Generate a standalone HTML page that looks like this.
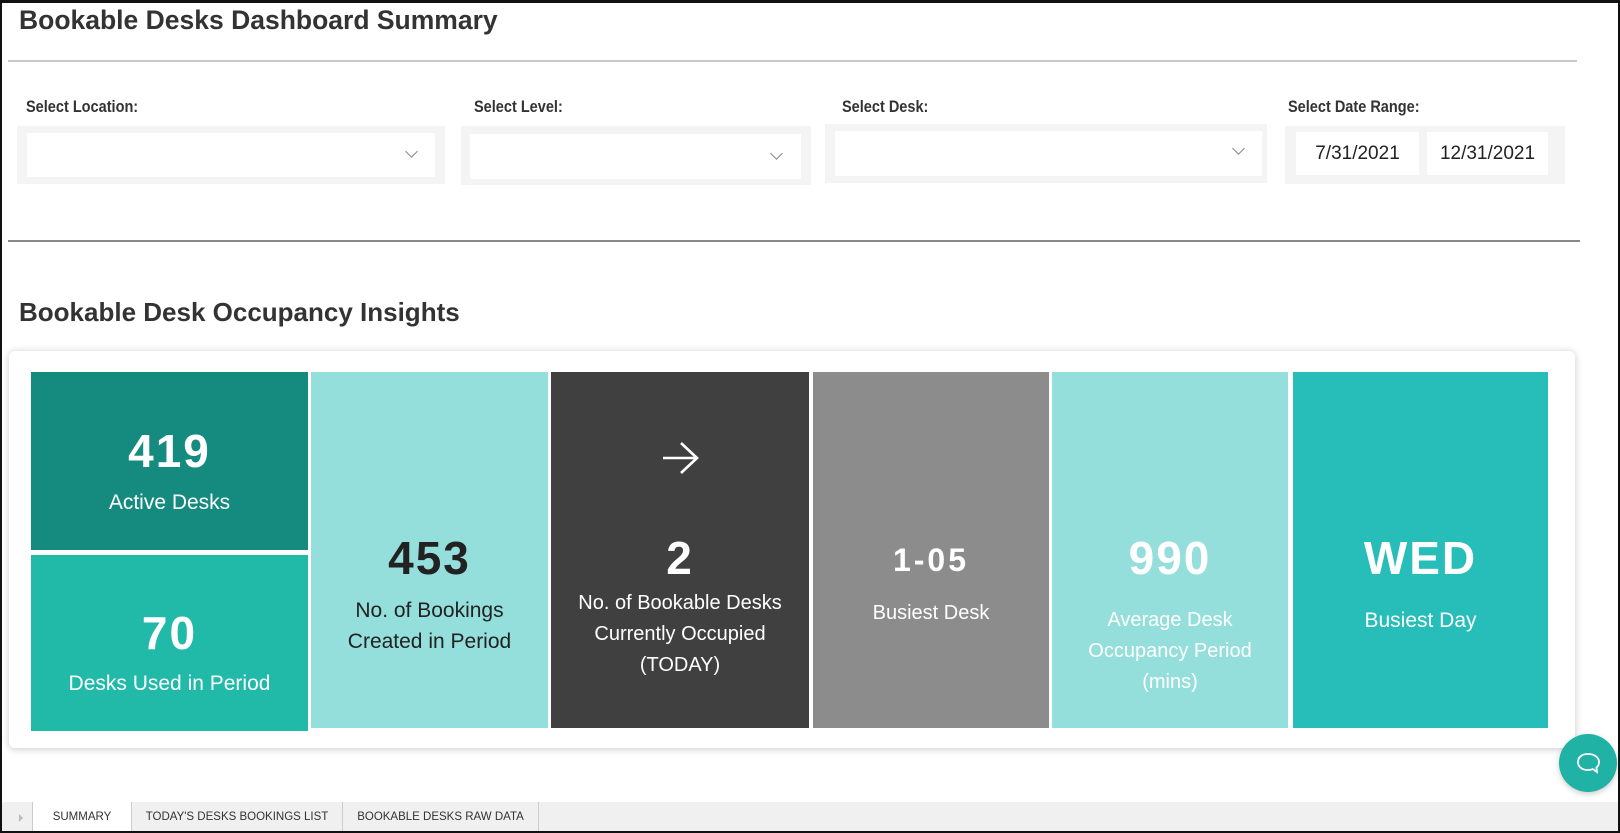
<!DOCTYPE html>
<html><head><meta charset="utf-8"><style>
*{margin:0;padding:0;box-sizing:border-box}
body{width:1620px;height:833px;overflow:hidden;background:#fff;font-family:"Liberation Sans",sans-serif;position:relative}
.frame{position:absolute;left:0;top:0;width:1620px;height:833px;border:2px solid #111;border-top-width:3px;pointer-events:none;z-index:10}
.a{position:absolute}
h1{position:absolute;left:19px;top:5px;font-size:26.5px;font-weight:bold;color:#333}
h2{position:absolute;left:19px;top:297px;font-size:26px;font-weight:bold;color:#333}
.lbl{position:absolute;top:98px;font-size:16.5px;font-weight:bold;color:#333;transform:scaleX(.88);transform-origin:left}
.ob{position:absolute;background:#f4f4f4}
.ib{position:absolute;background:#fff}
.chev{position:absolute;width:9px;height:9px;border-right:1px solid #888;border-bottom:1px solid #888;transform:rotate(45deg)}
.date{position:absolute;background:#fff;font-size:19px;color:#222;text-align:center;line-height:43px}
.t{position:absolute;color:#fff;text-align:center}
.n{position:absolute;left:0;right:0;font-size:46px;font-weight:bold;letter-spacing:2px;line-height:50px}
.l{position:absolute;left:0;right:0;font-size:21px;line-height:31px}
.tab{position:absolute;top:802px;height:31px;font-size:11.5px;color:#333;line-height:31px;text-align:center;border-right:1px solid #ccc}
</style></head><body>
<h1>Bookable Desks Dashboard Summary</h1>
<div class="a" style="left:8px;top:60px;width:1569px;height:2px;background:#c8c8c8"></div>

<div class="lbl" style="left:26px">Select Location:</div>
<div class="lbl" style="left:474px">Select Level:</div>
<div class="lbl" style="left:842px">Select Desk:</div>
<div class="lbl" style="left:1288px">Select Date Range:</div>

<div class="ob" style="left:17px;top:126px;width:428px;height:58px"></div>
<div class="ib" style="left:27px;top:133px;width:408px;height:44px"></div>
<div class="chev" style="left:407px;top:147px"></div>
<div class="ob" style="left:461px;top:126px;width:350px;height:59px"></div>
<div class="ib" style="left:470px;top:134px;width:331px;height:45px"></div>
<div class="chev" style="left:772px;top:149px"></div>
<div class="ob" style="left:825px;top:124px;width:442px;height:59px"></div>
<div class="ib" style="left:835px;top:131px;width:427px;height:45px"></div>
<div class="chev" style="left:1234px;top:144px"></div>
<div class="ob" style="left:1285px;top:126px;width:280px;height:58px"></div>
<div class="date" style="left:1296px;top:132px;width:123px;height:43px">7/31/2021</div>
<div class="date" style="left:1427px;top:132px;width:121px;height:43px">12/31/2021</div>

<div class="a" style="left:8px;top:240px;width:1572px;height:2px;background:#888"></div>
<h2>Bookable Desk Occupancy Insights</h2>

<div class="a" style="left:9px;top:351px;width:1566px;height:397px;background:#fff;border-radius:6px;box-shadow:0 1px 8px rgba(0,0,0,.22)"></div>

<div class="t" style="left:31px;top:372px;width:277px;height:178px;background:#158a7e">
 <div class="n" style="top:54px">419</div><div class="l" style="top:115px">Active Desks</div></div>
<div class="t" style="left:31px;top:555px;width:277px;height:176px;background:#21b9a8">
 <div class="n" style="top:53px">70</div><div class="l" style="top:113px">Desks Used in Period</div></div>
<div class="t" style="left:311px;top:372px;width:237px;height:356px;background:#94dfdb;color:#222">
 <div class="n" style="top:161px">453</div><div class="l" style="top:223px">No. of Bookings<br>Created in Period</div></div>
<div class="t" style="left:551px;top:372px;width:258px;height:356px;background:#404040">
 <svg class="a" style="left:110px;top:68px" width="40" height="36" viewBox="0 0 40 36"><path d="M2 18H36M20 3L36 18L20 33" fill="none" stroke="#fff" stroke-width="2.6"/></svg>
 <div class="n" style="top:161px">2</div><div class="l" style="top:216px;font-size:20px">No. of Bookable Desks<br>Currently Occupied<br>(TODAY)</div></div>
<div class="t" style="left:813px;top:372px;width:236px;height:356px;background:#8c8c8c">
 <div class="n" style="top:163px;font-size:32px;letter-spacing:3px">1-05</div><div class="l" style="top:226px;font-size:20px">Busiest Desk</div></div>
<div class="t" style="left:1052px;top:372px;width:236px;height:356px;background:#94dfdb">
 <div class="n" style="top:161px">990</div><div class="l" style="top:233px;font-size:20px">Average Desk<br>Occupancy Period<br>(mins)</div></div>
<div class="t" style="left:1293px;top:372px;width:255px;height:356px;background:#27bdb9">
 <div class="n" style="top:161px">WED</div><div class="l" style="top:233px">Busiest Day</div></div>

<div class="a" style="left:1559px;top:734px;width:58px;height:58px;border-radius:50%;background:#20b2a5;box-shadow:0 2px 6px rgba(0,0,0,.2)"></div>
<svg class="a" style="left:1575px;top:751px" width="28" height="26" viewBox="0 0 28 26"><path d="M13 3C6.5 3 3 6.5 3 11s3.5 8 10 8c2 0 3.5-.3 5-.9L22 21l-.5-4.5C23.5 15 24 13 24 11c0-4.5-4.5-8-11-8z" fill="none" stroke="#fff" stroke-width="1.8"/></svg>

<div class="a" style="left:0;top:802px;width:1620px;height:31px;background:#f0f0f0"></div>
<div class="a" style="left:19px;top:814px;width:0;height:0;border-left:4px solid #bbb;border-top:4px solid transparent;border-bottom:4px solid transparent"></div>
<div class="tab" style="left:32px;width:100px;background:#fff;border-left:1px solid #ccc">SUMMARY</div>
<div class="tab" style="left:132px;width:211px">TODAY'S DESKS BOOKINGS LIST</div>
<div class="tab" style="left:343px;width:196px">BOOKABLE DESKS RAW DATA</div>
<div class="frame"></div>
</body></html>
